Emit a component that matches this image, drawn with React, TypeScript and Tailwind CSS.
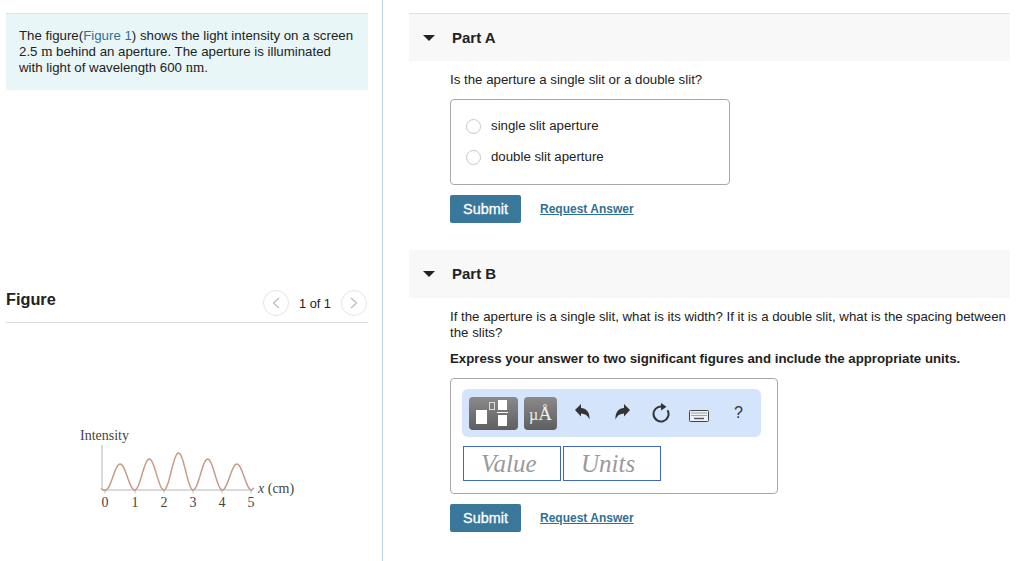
import React from 'react';

const sans = 'font-["Liberation_Sans",Arial,sans-serif]';

// intensity pattern: sin^2 fringes under a peak envelope
const peaks = [26, 31, 37, 31, 26];
const fringePoints: string[] = ['21,65.5', '23,67'];
for (let i = 0; i <= 200; i++) {
  const t = i / 40;
  const amp = peaks[Math.min(Math.floor(t), 4)];
  const y = 67 - amp * Math.sin(Math.PI * t) ** 2;
  fringePoints.push(`${(25.5 + 29.2 * t).toFixed(1)},${y.toFixed(1)}`);
}
fringePoints.push('174,65');

function PartHeader({ label }: { label: string }) {
  return (
    <div className="flex h-12 items-center bg-[#f8f8f8]">
      <svg width="12" height="6" viewBox="0 0 12 6" className="ml-[14px]">
        <path d="M0 0h12L6 6z" fill="#222" />
      </svg>
      <span className="ml-[17px] text-[15px] font-bold text-[#222]">{label}</span>
    </div>
  );
}

function SubmitRow() {
  return (
    <div className="flex items-center">
      <button className="h-[28px] w-[71px] rounded-[2px] bg-[#3a789b] pt-px text-[14.4px] font-medium text-white [-webkit-text-stroke:0.3px_white]">
        Submit
      </button>
      <a className="ml-[19px] text-xs font-bold text-[#2f7196] underline">Request Answer</a>
    </div>
  );
}

function Radio({ label }: { label: string }) {
  return (
    <div className="flex h-[31px] items-center">
      <span className="h-[15px] w-[15px] rounded-full border border-[#c8c8c8] bg-white" />
      <span className="ml-[10px] -translate-y-px text-[13.25px] text-[#222]">{label}</span>
    </div>
  );
}

function IntensityChart() {
  return (
    <svg width="240" height="90" viewBox="0 0 240 90" className="ml-[74px] block">
      <g fontFamily="'Liberation Serif', serif" fontSize="14" fill="#444">
        <text x="0" y="17">Intensity</text>
        <text x="178" y="70"><tspan fontStyle="italic">x</tspan> (cm)</text>
        <text x="25" y="84" textAnchor="middle">0</text>
        <text x="55" y="84" textAnchor="middle">1</text>
        <text x="84" y="84" textAnchor="middle">2</text>
        <text x="113" y="84" textAnchor="middle">3</text>
        <text x="142" y="84" textAnchor="middle">4</text>
        <text x="171" y="84" textAnchor="middle">5</text>
      </g>
      <path d="M22 22V67H173" fill="none" stroke="#b5b5b5" strokeWidth="1" />
      <path d="M25 67v3M55 67v3M84 67v3M113 67v3M142 67v3M171 67v3" stroke="#b5b5b5" strokeWidth="1" />
      <polyline points={fringePoints.join(' ')} fill="none" stroke="#c49c88" strokeWidth="1.5" />
    </svg>
  );
}

function ToolIcons() {
  return (
    <div className="ml-[18px] flex items-center">
      <svg width="15" height="16" viewBox="0 0 15 16" className="-translate-y-px">
        <path d="M0 6 6 0v4c5 0 9 4 8.500 11.500C13 11.500 10 9.500 6 9.500V12.500z" fill="#333" />
      </svg>
      <svg width="15" height="16" viewBox="0 0 15 16" className="ml-[25px] -translate-y-px">
        <path d="M15 6 9 0v4C4 4 0 8 .5 15.500 2 11.500 5 9.500 9 9.500V12.500z" fill="#333" />
      </svg>
      <svg width="18" height="20" viewBox="0 0 18 20" className="ml-[22px]">
        <path d="M9.500 3.500A7.500 7.500 0 1 0 15.500 7.200" fill="none" stroke="#333" strokeWidth="2" />
        <path d="M9 0l5.500 3.700L9 7.500z" fill="#333" />
      </svg>
      <svg width="20" height="12" viewBox="0 0 20 12" className="ml-[19px] translate-y-[3px]">
        <rect x="0.5" y="0.5" width="19" height="11" rx="1" fill="#eef2f6" stroke="#444" />
        <path d="M2.500 3h15M2.500 5.500h15" stroke="#555" strokeWidth="1.200" strokeDasharray="1 1" />
        <path d="M5 8.500h10" stroke="#555" strokeWidth="1.400" />
      </svg>
      <span className="ml-[25px] text-base text-[#333]">?</span>
    </div>
  );
}

export default function App() {
  return (
    <div className={`flex h-[561px] w-[1024px] overflow-hidden bg-white ${sans}`}>
      {/* Left column */}
      <div className="h-full w-[383px] shrink-0 border-r border-[#bdd0e2] pl-[6px] pr-[14px] pt-[13px]">
        <div className="h-[77px] border-t border-[#e0e4e8] bg-[#e8f6f7] pl-[13px] pt-[14px] leading-4 text-[#222]">
          <p className="text-[13.28px]">
            The figure(<span className="text-[#2f7196]">Figure 1</span>) shows the light intensity on a screen
            <br />
            2.5 <span className='font-["Liberation_Serif",serif] text-[14.5px] leading-none'>m</span> behind an aperture. The aperture is illuminated
            <br />
            with light of wavelength 600 <span className='font-["Liberation_Serif",serif] text-[14.5px] leading-none'>nm</span>.
          </p>
        </div>

        <div className="mt-[197px] flex h-[36px] items-start justify-between border-b border-[#dcdcdc]">
          <span className="text-[16.3px] font-bold leading-[24px] text-[#222]">Figure</span>
          <div className="mt-[3px] flex items-center pr-[1px] text-[12.8px] text-[#222]">
            <span className="flex h-[26px] w-[26px] items-center justify-center rounded-full border border-[#e4e4e4]">
              <svg width="8" height="12" viewBox="0 0 8 12"><path d="M7 1 1.500 6 7 11" fill="none" stroke="#bbb" strokeWidth="1.200" /></svg>
            </span>
            <span className="mx-[10px] mt-[2px]">1 of 1</span>
            <span className="flex h-[26px] w-[26px] items-center justify-center rounded-full border border-[#e4e4e4]">
              <svg width="8" height="12" viewBox="0 0 8 12"><path d="M1 1 6.500 6 1 11" fill="none" stroke="#bbb" strokeWidth="1.200" /></svg>
            </span>
          </div>
        </div>

        <div className="mt-[100px]">
          <IntensityChart />
        </div>
      </div>

      {/* Right column */}
      <div className="ml-[26px] w-[601px] shrink-0 pt-[13px]">
        <div className="border-t border-[#e0e0e0] [&>div]:h-[47px] [&_span]:translate-y-px">
          <PartHeader label="Part A" />
        </div>
        <div className="pl-[41px]">
          <p className="mt-[11px] text-[13.28px] leading-4 text-[#222]">Is the aperture a single slit or a double slit?</p>
          <div className="mt-[11px] h-[86px] w-[280px] rounded-[4px] border border-[#a8a8a8] pl-[15px] pt-[11px]">
            <Radio label="single slit aperture" />
            <Radio label="double slit aperture" />
          </div>
          <div className="mt-[10px]">
            <SubmitRow />
          </div>
        </div>

        <div className="mt-[27px]">
          <PartHeader label="Part B" />
        </div>
        <div className="pl-[41px]">
          <p className="mt-[11px] text-[13.28px] leading-4 text-[#222]">
            If the aperture is a single slit, what is its width? If it is a double slit, what is the spacing between
            <br />
            the slits?
          </p>
          <p className="mt-[10px] text-[13.25px] font-bold leading-4 text-[#222]">
            Express your answer to two significant figures and include the appropriate units.
          </p>
          <div className="mt-[11px] h-[116px] w-[328px] rounded-[4px] border border-[#a8a8a8] pl-[11px] pt-[10px]">
            <div className="flex h-[48px] w-[299px] items-center rounded-[6px] bg-[#d3e4fb] pl-[7px]">
              <div className="relative h-[33px] w-[49px] rounded-[4px] bg-gradient-to-b from-[#8a8a8a] to-[#5f5f5f]">
                <span className="absolute left-[7px] top-[13px] h-[14px] w-[11px] bg-white" />
                <span className="absolute left-[20px] top-[5px] h-[8px] w-[6px] border border-[#ddd]" />
                <span className="absolute left-[29px] top-[3px] h-[10px] w-[9px] bg-white" />
                <span className="absolute left-[28px] top-[15px] h-px w-[11px] bg-white" />
                <span className="absolute left-[29px] top-[18px] h-[11px] w-[9px] bg-white" />
              </div>
              <div className='ml-[6px] flex h-[33px] w-[33px] items-end justify-center rounded-[4px] bg-gradient-to-b from-[#8a8a8a] to-[#5f5f5f] pb-[7px] font-["Liberation_Serif",serif] leading-none text-[#eee]'>
                <span className="text-[16px]">µ</span>
                <span className="text-[19px]">Å</span>
              </div>
              <ToolIcons />
            </div>
            <div className='ml-px mt-[9px] flex gap-[2px] font-["Liberation_Serif",serif] text-[25px] italic text-[#9a9a9a]'>
              <div className="flex h-[35px] w-[98px] items-center border border-[#3f68c0] pl-[17px]">Value</div>
              <div className="flex h-[35px] w-[98px] items-center border border-[#3f68c0] pl-[17px]">Units</div>
            </div>
          </div>
          <div className="mt-[10px]">
            <SubmitRow />
          </div>
        </div>
      </div>
    </div>
  );
}
